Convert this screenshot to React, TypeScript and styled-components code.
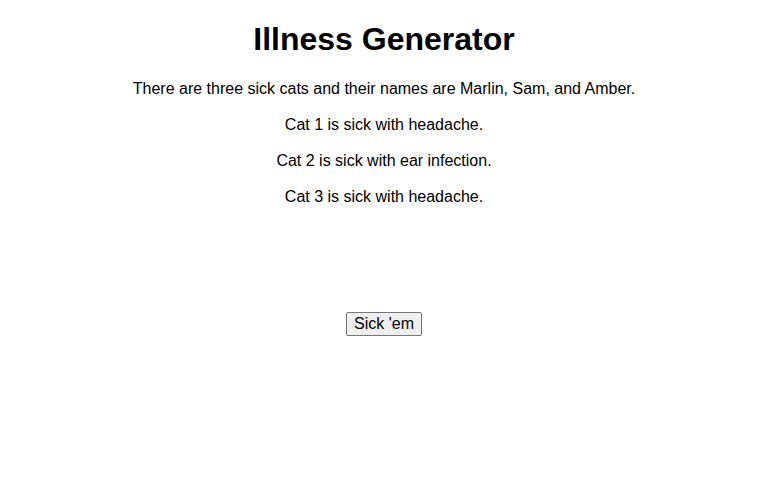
import React from 'react';
import styled, { createGlobalStyle } from 'styled-components';

const GlobalStyle = createGlobalStyle`
  body {
    margin: 8px;
    background: #ffffff;
    color: #000000;
    font-family: 'Liberation Sans', Arial, sans-serif;
  }
`;

const Page = styled.main`
  display: flex;
  flex-direction: column;
  align-items: center;
  text-align: center;
`;

const Title = styled.h1`
  margin: 13px 0 22px;
  font-size: 32px;
  font-weight: 700;
  line-height: 37px;
`;

const Line = styled.p`
  margin: 0 0 18px;
  font-size: 16px;
  line-height: 18px;
`;

const Actions = styled.div`
  padding-top: 88px;
`;

const Button = styled.button`
  font-family: 'Liberation Sans', Arial, sans-serif;
  font-size: 16px;
  line-height: 18px;
  padding: 2px 7px;
  color: #000000;
  background: #efefef;
  border: 1px solid #767676;
  border-radius: 2px;
  cursor: pointer;
`;

const cats = ['Marlin', 'Sam', 'Amber'];
const illnesses = ['headache', 'ear infection', 'headache'];

export default function App() {
  return (
    <>
      <GlobalStyle />
      <Page>
        <Title>Illness Generator</Title>
        <Line>
          There are three sick cats and their names are {cats[0]}, {cats[1]}, and {cats[2]}.
        </Line>
        {illnesses.map((illness, i) => (
          <Line key={i}>
            Cat {i + 1} is sick with {illness}.
          </Line>
        ))}
        <Actions>
          <Button type="button">Sick 'em</Button>
        </Actions>
      </Page>
    </>
  );
}
